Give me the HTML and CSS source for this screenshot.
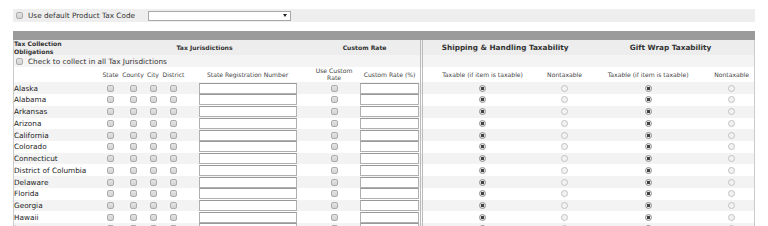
FILE: index.html
```html
<!DOCTYPE html>
<html lang="en">
<head>
    <meta charset="UTF-8">
    <title>Tax Settings</title>
    <link rel="stylesheet" href="styles.css">
</head>
<body>
<div class="page">

    <!-- Default tax code -->
    <div class="tax-code">
        <input type="checkbox" id="useDefault">
        <label for="useDefault">Use default Product Tax Code</label>
        <span class="select-wrap"><select></select></span>
    </div>

    <div class="title-bar"></div>

    <!-- Jurisdictions -->
    <table class="tax-table">
        <colgroup>
            <col style="width:86px"><col style="width:21px"><col style="width:24px"><col style="width:16px">
            <col style="width:25px"><col style="width:123px"><col style="width:50px"><col style="width:61px">
            <col style="width:122px"><col style="width:45px"><col style="width:122px"><col style="width:45px">
        </colgroup>
        <thead>
            <tr class="group-head">
                <th class="obligations">Tax Collection Obligations</th>
                <th colspan="5">Tax Jurisdictions</th>
                <th colspan="2">Custom Rate</th>
                <th colspan="2" class="ship-start big">Shipping &amp; Handling Taxability</th>
                <th colspan="2" class="big">Gift Wrap Taxability</th>
            </tr>
            <tr class="all-row">
                <td colspan="8"><input type="checkbox" id="collectAll"><label for="collectAll">Check to collect in all Tax Jurisdictions</label></td>
                <td colspan="4" class="ship-start"></td>
            </tr>
            <tr class="col-head">
                <th></th>
                <th>State</th>
                <th>County</th>
                <th>City</th>
                <th>District</th>
                <th>State Registration Number</th>
                <th>Use Custom Rate</th>
                <th>Custom Rate (%)</th>
                <th class="ship-start">Taxable (if item is taxable)</th>
                <th>Nontaxable</th>
                <th>Taxable (if item is taxable)</th>
                <th>Nontaxable</th>
            </tr>
        </thead>
        <tbody>
            <tr><td class="state">Alaska</td><td><input type="checkbox"></td><td><input type="checkbox"></td><td><input type="checkbox"></td><td><input type="checkbox"></td><td><input type="text" class="reg"></td><td><input type="checkbox"></td><td><input type="text" class="rate"></td><td class="ship-start"><input type="radio" name="ship-ak" checked></td><td><input type="radio" name="ship-ak"></td><td><input type="radio" name="gift-ak" checked></td><td><input type="radio" name="gift-ak"></td></tr>
            <tr><td class="state">Alabama</td><td><input type="checkbox"></td><td><input type="checkbox"></td><td><input type="checkbox"></td><td><input type="checkbox"></td><td><input type="text" class="reg"></td><td><input type="checkbox"></td><td><input type="text" class="rate"></td><td class="ship-start"><input type="radio" name="ship-al" checked></td><td><input type="radio" name="ship-al"></td><td><input type="radio" name="gift-al" checked></td><td><input type="radio" name="gift-al"></td></tr>
            <tr><td class="state">Arkansas</td><td><input type="checkbox"></td><td><input type="checkbox"></td><td><input type="checkbox"></td><td><input type="checkbox"></td><td><input type="text" class="reg"></td><td><input type="checkbox"></td><td><input type="text" class="rate"></td><td class="ship-start"><input type="radio" name="ship-ar" checked></td><td><input type="radio" name="ship-ar"></td><td><input type="radio" name="gift-ar" checked></td><td><input type="radio" name="gift-ar"></td></tr>
            <tr><td class="state">Arizona</td><td><input type="checkbox"></td><td><input type="checkbox"></td><td><input type="checkbox"></td><td><input type="checkbox"></td><td><input type="text" class="reg"></td><td><input type="checkbox"></td><td><input type="text" class="rate"></td><td class="ship-start"><input type="radio" name="ship-az" checked></td><td><input type="radio" name="ship-az"></td><td><input type="radio" name="gift-az" checked></td><td><input type="radio" name="gift-az"></td></tr>
            <tr><td class="state">California</td><td><input type="checkbox"></td><td><input type="checkbox"></td><td><input type="checkbox"></td><td><input type="checkbox"></td><td><input type="text" class="reg"></td><td><input type="checkbox"></td><td><input type="text" class="rate"></td><td class="ship-start"><input type="radio" name="ship-ca" checked></td><td><input type="radio" name="ship-ca"></td><td><input type="radio" name="gift-ca" checked></td><td><input type="radio" name="gift-ca"></td></tr>
            <tr><td class="state">Colorado</td><td><input type="checkbox"></td><td><input type="checkbox"></td><td><input type="checkbox"></td><td><input type="checkbox"></td><td><input type="text" class="reg"></td><td><input type="checkbox"></td><td><input type="text" class="rate"></td><td class="ship-start"><input type="radio" name="ship-co" checked></td><td><input type="radio" name="ship-co"></td><td><input type="radio" name="gift-co" checked></td><td><input type="radio" name="gift-co"></td></tr>
            <tr><td class="state">Connecticut</td><td><input type="checkbox"></td><td><input type="checkbox"></td><td><input type="checkbox"></td><td><input type="checkbox"></td><td><input type="text" class="reg"></td><td><input type="checkbox"></td><td><input type="text" class="rate"></td><td class="ship-start"><input type="radio" name="ship-ct" checked></td><td><input type="radio" name="ship-ct"></td><td><input type="radio" name="gift-ct" checked></td><td><input type="radio" name="gift-ct"></td></tr>
            <tr><td class="state">District of Columbia</td><td><input type="checkbox"></td><td><input type="checkbox"></td><td><input type="checkbox"></td><td><input type="checkbox"></td><td><input type="text" class="reg"></td><td><input type="checkbox"></td><td><input type="text" class="rate"></td><td class="ship-start"><input type="radio" name="ship-dc" checked></td><td><input type="radio" name="ship-dc"></td><td><input type="radio" name="gift-dc" checked></td><td><input type="radio" name="gift-dc"></td></tr>
            <tr><td class="state">Delaware</td><td><input type="checkbox"></td><td><input type="checkbox"></td><td><input type="checkbox"></td><td><input type="checkbox"></td><td><input type="text" class="reg"></td><td><input type="checkbox"></td><td><input type="text" class="rate"></td><td class="ship-start"><input type="radio" name="ship-de" checked></td><td><input type="radio" name="ship-de"></td><td><input type="radio" name="gift-de" checked></td><td><input type="radio" name="gift-de"></td></tr>
            <tr><td class="state">Florida</td><td><input type="checkbox"></td><td><input type="checkbox"></td><td><input type="checkbox"></td><td><input type="checkbox"></td><td><input type="text" class="reg"></td><td><input type="checkbox"></td><td><input type="text" class="rate"></td><td class="ship-start"><input type="radio" name="ship-fl" checked></td><td><input type="radio" name="ship-fl"></td><td><input type="radio" name="gift-fl" checked></td><td><input type="radio" name="gift-fl"></td></tr>
            <tr><td class="state">Georgia</td><td><input type="checkbox"></td><td><input type="checkbox"></td><td><input type="checkbox"></td><td><input type="checkbox"></td><td><input type="text" class="reg"></td><td><input type="checkbox"></td><td><input type="text" class="rate"></td><td class="ship-start"><input type="radio" name="ship-ga" checked></td><td><input type="radio" name="ship-ga"></td><td><input type="radio" name="gift-ga" checked></td><td><input type="radio" name="gift-ga"></td></tr>
            <tr><td class="state">Hawaii</td><td><input type="checkbox"></td><td><input type="checkbox"></td><td><input type="checkbox"></td><td><input type="checkbox"></td><td><input type="text" class="reg"></td><td><input type="checkbox"></td><td><input type="text" class="rate"></td><td class="ship-start"><input type="radio" name="ship-hi" checked></td><td><input type="radio" name="ship-hi"></td><td><input type="radio" name="gift-hi" checked></td><td><input type="radio" name="gift-hi"></td></tr>
            <tr><td class="state">Iowa</td><td><input type="checkbox"></td><td><input type="checkbox"></td><td><input type="checkbox"></td><td><input type="checkbox"></td><td><input type="text" class="reg"></td><td><input type="checkbox"></td><td><input type="text" class="rate"></td><td class="ship-start"><input type="radio" name="ship-ia" checked></td><td><input type="radio" name="ship-ia"></td><td><input type="radio" name="gift-ia" checked></td><td><input type="radio" name="gift-ia"></td></tr>
            <tr><td class="state">Idaho</td><td><input type="checkbox"></td><td><input type="checkbox"></td><td><input type="checkbox"></td><td><input type="checkbox"></td><td><input type="text" class="reg"></td><td><input type="checkbox"></td><td><input type="text" class="rate"></td><td class="ship-start"><input type="radio" name="ship-id" checked></td><td><input type="radio" name="ship-id"></td><td><input type="radio" name="gift-id" checked></td><td><input type="radio" name="gift-id"></td></tr>
        </tbody>
    </table>

</div>
</body>
</html>
```

FILE: styles.css
```css
/* Base */
* {
    box-sizing: border-box;
}

body {
    margin: 0;
    font-family: "DejaVu Sans", Verdana, sans-serif;
    font-size: 7.3px;
    color: #222;
    background: #fff;
}

.page {
    width: 768px;
    padding: 9px 13px 0;
}

/* Default tax code bar */
.tax-code {
    display: flex;
    align-items: center;
    width: 742px;
    height: 13px;
    padding-left: 3px;
    background: #eee;
    color: #333;
}

.tax-code label {
    width: 120px;
}

.select-wrap {
    position: relative;
    display: block;
}

.select-wrap select {
    display: block;
    width: 143px;
    height: 10px;
    margin: 0;
    padding: 0;
    border: 1px solid #a8a8a8;
    background: #fff;
    appearance: none;
    -webkit-appearance: none;
    border-radius: 0;
}

.select-wrap::after {
    content: "";
    position: absolute;
    right: 4px;
    top: 3px;
    border-left: 2px solid transparent;
    border-right: 2px solid transparent;
    border-top: 3px solid #222;
}

.title-bar {
    width: 742px;
    height: 9px;
    margin-top: 9px;
    background: #9b9b9b;
}

/* Table */
.tax-table {
    width: 742px;
    table-layout: fixed;
    border-collapse: separate;
    border-spacing: 0;
    border-left: 1px solid #ccc;
    border-right: 1px solid #ccc;
}

.tax-table th,
.tax-table td {
    padding: 0;
    text-align: center;
    vertical-align: middle;
}

.ship-start {
    border-left: 3px double #bbb;
}

.group-head th {
    height: 15px;
    background: #ededed;
    font-size: 6.1px;
    line-height: 7.7px;
    color: #333;
}

.group-head th.obligations {
    text-align: left;
}

.group-head th.big {
    font-size: 7.3px;
}

.all-row td {
    height: 12px;
    background: #f4f4f4;
    text-align: left;
    color: #333;
}

.col-head th {
    height: 15px;
    font-weight: normal;
    font-size: 6.1px;
    line-height: 6.8px;
    color: #444;
}

.tax-table tbody tr {
    height: 11.73px;
}

.tax-table tbody tr:nth-child(odd) {
    background: #f3f3f3;
}

.tax-table td.state {
    text-align: left;
    white-space: nowrap;
}

/* Form controls */
input[type="checkbox"] {
    appearance: none;
    -webkit-appearance: none;
    display: inline-block;
    width: 7px;
    height: 7px;
    margin: 0;
    border: 1px solid #acacac;
    border-radius: 2px;
    background: linear-gradient(#e4e4e4, #d2d2d2);
}

.tax-code input[type="checkbox"] {
    margin-right: 5px;
}

.all-row input[type="checkbox"] {
    margin: 0 5px 0 2px;
    vertical-align: -1px;
}

.tax-table tbody input {
    display: block;
    margin: 0 auto;
}

input[type="text"] {
    height: 11px;
    margin: 0;
    padding: 0;
    border: 1px solid #b0b0b0;
    border-top-color: #999;
    background: #fff;
}

input.reg {
    width: 98px;
}

input.rate {
    width: 59px;
}

input[type="radio"] {
    appearance: none;
    -webkit-appearance: none;
    width: 7px;
    height: 7px;
    margin: 0;
    border: 1px solid #c2c2c2;
    border-radius: 50%;
    background: #f2f2f2;
}

input[type="radio"]:checked {
    border-color: #8e8e8e;
    background: radial-gradient(circle, #404040 1.4px, #e6e6e6 1.9px);
}
```
